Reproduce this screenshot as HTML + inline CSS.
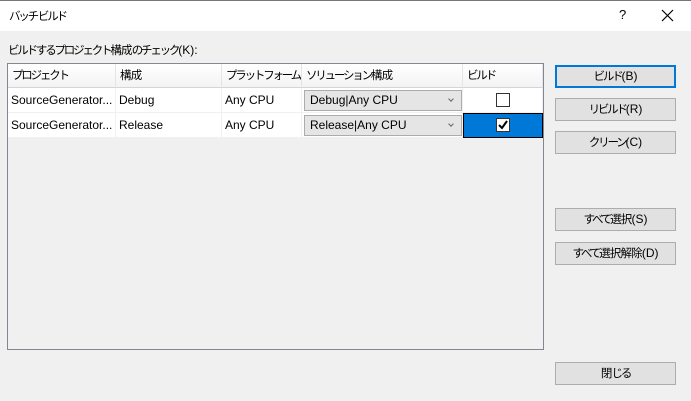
<!DOCTYPE html>
<html><head><meta charset="utf-8"><style>
*{margin:0;padding:0;box-sizing:border-box}
body{width:691px;height:401px;background:#f0f0f0;position:relative;overflow:hidden;font-family:"Liberation Sans","Noto Sans CJK JP",sans-serif;font-size:12px;color:#000}
.a{position:absolute}
.j{letter-spacing:-2.2px;font-size:11.5px}
.k{letter-spacing:-0.8px;font-size:11.5px}
.title{left:0;top:0;width:691px;height:31px;background:#fff;border-top:1px solid #777}
.btn{position:absolute;left:555px;width:121px;height:23px;background:#e1e1e1;border:1px solid #adadad;text-align:center;line-height:21px;font-size:12px}
.grid{left:7px;top:63px;width:537px;height:287px;border:1px solid #828790;background:#f0f0f0}
.hd{position:absolute;top:0;height:24px;background:linear-gradient(#fff,#f3f3f5);border-right:1px solid #e5e5e5;border-bottom:1px solid #d5d5d5;padding-left:4px;line-height:23px;white-space:nowrap;overflow:hidden}
.c{position:absolute;height:25px;background:#fff;border-right:1px solid #f0f0f0;border-bottom:1px solid #f0f0f0;padding-left:3px;line-height:24px;white-space:nowrap;overflow:hidden}
.cb{position:absolute;left:296px;width:158px;height:21px;background:#e5e5e5;border:1px solid #acacac;padding-left:5px;line-height:19px}
.cb:after{content:"";position:absolute;right:8px;top:6px;width:3px;height:3px;border-right:1px solid #666;border-bottom:1px solid #666;transform:rotate(45deg)}
</style></head><body>
<div class="a title"></div>
<div class="a" style="left:9px;top:8px"><span class="j">バッチ ビルド</span></div>
<div class="a" style="left:619px;top:7px;font-size:13px">?</div>
<svg class="a" style="left:661px;top:9px" width="13" height="13"><path d="M1 1L12 12M12 1L1 12" stroke="#000" stroke-width="1.2"/></svg>
<div class="a" style="left:8px;top:42px"><span class="j">ビルドするプロジェクト</span><span class="k">構成</span><span class="j">のチェック</span>(K):</div>
<div class="a grid">
<div class="hd" style="left:0;width:108px"><span class="j">プロジェクト</span></div>
<div class="hd" style="left:108px;width:106px"><span class="k">構成</span></div>
<div class="hd" style="left:214px;width:80px"><span class="j">プラットフォーム</span></div>
<div class="hd" style="left:294px;width:161px"><span class="j">ソリューション</span><span class="k">構成</span></div>
<div class="hd" style="left:455px;width:80px"><span class="j">ビルド</span></div>
<div class="c" style="left:0;top:24px;width:108px">SourceGenerator...</div>
<div class="c" style="left:108px;top:24px;width:106px">Debug</div>
<div class="c" style="left:214px;top:24px;width:80px">Any CPU</div>
<div class="c" style="left:294px;top:24px;width:161px"></div>
<div class="c" style="left:455px;top:24px;width:80px"></div>
<div class="c" style="left:0;top:49px;width:108px">SourceGenerator...</div>
<div class="c" style="left:108px;top:49px;width:106px">Release</div>
<div class="c" style="left:214px;top:49px;width:80px">Any CPU</div>
<div class="c" style="left:294px;top:49px;width:161px"></div>
<div class="cb" style="top:26px">Debug|Any CPU</div>
<div class="cb" style="top:51px">Release|Any CPU</div>
<div class="a" style="left:488px;top:29px;width:14px;height:14px;border:1px solid #333;background:#fff"></div>
<div class="a" style="left:455px;top:49px;width:80px;height:25px;background:#0078d7;border:1px solid #000"></div>
<div class="a" style="left:488px;top:54px;width:14px;height:14px;border:1px solid #333;background:#fff"></div>
<svg class="a" style="left:489px;top:55px" width="12" height="12"><path d="M2 6L5 9L10 2" stroke="#000" stroke-width="2" fill="none"/></svg>
</div>
<div class="btn" style="top:65px;border:2px solid #0078d7;line-height:19px"><span class="j">ビルド</span>(B)</div>
<div class="btn" style="top:98px"><span class="j">リビルド</span>(R)</div>
<div class="btn" style="top:131px"><span class="j">クリーン</span>(C)</div>
<div class="btn" style="top:208px"><span class="j">すべて</span><span class="k">選択</span>(S)</div>
<div class="btn" style="top:242px"><span class="j">すべて</span><span class="k">選択解除</span>(D)</div>
<div class="btn" style="top:362px"><span class="k">閉</span><span class="j">じる</span></div>
</body></html>
